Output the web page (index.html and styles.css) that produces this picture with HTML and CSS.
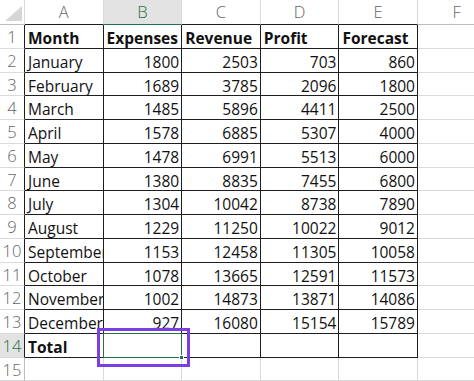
FILE: index.html
```html
<html lang="en">

<head>
    <meta charset="UTF-8">
    <meta name="viewport" content="width=device-width, initial-scale=1.0">
    <title>Sheet1</title>
    <link rel="stylesheet" href="styles.css">
</head>

<body>
    <div class="sheet">
        <div class="corner"><span class="tri"></span></div>
        <div class="hd edge">A</div>
        <div class="hd edge active">B</div>
        <div class="hd edge">C</div>
        <div class="hd edge">D</div>
        <div class="hd edge">E</div>
        <div class="hd">F</div>

        <div class="rh edge">1</div>
        <div class="cell d b">Month</div><div class="cell d b">Expenses</div><div class="cell d b">Revenue</div><div class="cell d b">Profit</div><div class="cell d b">Forecast</div><div class="cell"></div>

        <div class="rh edge">2</div>
        <div class="cell d">January</div><div class="cell d n">1800</div><div class="cell d n">2503</div><div class="cell d n">703</div><div class="cell d n">860</div><div class="cell"></div>

        <div class="rh edge">3</div>
        <div class="cell d">February</div><div class="cell d n">1689</div><div class="cell d n">3785</div><div class="cell d n">2096</div><div class="cell d n">1800</div><div class="cell"></div>

        <div class="rh edge">4</div>
        <div class="cell d">March</div><div class="cell d n">1485</div><div class="cell d n">5896</div><div class="cell d n">4411</div><div class="cell d n">2500</div><div class="cell"></div>

        <div class="rh edge">5</div>
        <div class="cell d">April</div><div class="cell d n">1578</div><div class="cell d n">6885</div><div class="cell d n">5307</div><div class="cell d n">4000</div><div class="cell"></div>

        <div class="rh edge">6</div>
        <div class="cell d">May</div><div class="cell d n">1478</div><div class="cell d n">6991</div><div class="cell d n">5513</div><div class="cell d n">6000</div><div class="cell"></div>

        <div class="rh edge">7</div>
        <div class="cell d">June</div><div class="cell d n">1380</div><div class="cell d n">8835</div><div class="cell d n">7455</div><div class="cell d n">6800</div><div class="cell"></div>

        <div class="rh edge">8</div>
        <div class="cell d">July</div><div class="cell d n">1304</div><div class="cell d n">10042</div><div class="cell d n">8738</div><div class="cell d n">7890</div><div class="cell"></div>

        <div class="rh edge">9</div>
        <div class="cell d">August</div><div class="cell d n">1229</div><div class="cell d n">11250</div><div class="cell d n">10022</div><div class="cell d n">9012</div><div class="cell"></div>

        <div class="rh edge">10</div>
        <div class="cell d">September</div><div class="cell d n">1153</div><div class="cell d n">12458</div><div class="cell d n">11305</div><div class="cell d n">10058</div><div class="cell"></div>

        <div class="rh edge">11</div>
        <div class="cell d">October</div><div class="cell d n">1078</div><div class="cell d n">13665</div><div class="cell d n">12591</div><div class="cell d n">11573</div><div class="cell"></div>

        <div class="rh edge">12</div>
        <div class="cell d">November</div><div class="cell d n">1002</div><div class="cell d n">14873</div><div class="cell d n">13871</div><div class="cell d n">14086</div><div class="cell"></div>

        <div class="rh edge">13</div>
        <div class="cell d">December</div><div class="cell d n">927</div><div class="cell d n">16080</div><div class="cell d n">15154</div><div class="cell d n">15789</div><div class="cell"></div>

        <div class="rh edge active">14</div>
        <div class="cell d b">Total</div>
        <div class="cell d sel"><span class="handle"></span><span class="mark"></span></div>
        <div class="cell d"></div><div class="cell d"></div><div class="cell d"></div><div class="cell"></div>

        <div class="rh">15</div>
        <div class="cell"></div><div class="cell"></div><div class="cell"></div><div class="cell"></div><div class="cell"></div><div class="cell"></div>
    </div>
</body>

</html>
```

FILE: styles.css
```css
* {
    margin: 0;
    padding: 0;
    box-sizing: border-box;
}

body {
    background: #fff;
    font-family: 'Open Sans', sans-serif;
    overflow: hidden;
}

.sheet {
    display: grid;
    grid-template-columns: 25px repeat(6, 78.6px);
    grid-template-rows: 25px repeat(15, 23.75px);
}

/* column headers */
.corner,
.hd {
    background: #fff;
    border-right: 1px solid #dadada;
    border-bottom: 1px solid #bdbdbd;
}

.corner {
    position: relative;
}

.tri {
    position: absolute;
    right: 2px;
    bottom: 3px;
    width: 0;
    height: 0;
    border-left: 17px solid transparent;
    border-bottom: 15px solid #d6d6d6;
}

.hd {
    color: #666;
    font-size: 16.5px;
    font-weight: 300;
    text-align: center;
    line-height: 24px;
}

.hd.edge {
    border-bottom-color: #1e1e1e;
}

.hd.active {
    background: #e3e3e3;
    color: #217346;
    border-bottom: 1px solid #217346;
}

/* row headers */
.rh {
    color: #666;
    font-size: 16.5px;
    font-weight: 300;
    text-align: center;
    line-height: 22px;
    padding-top: 1px;
    border-right: 1px solid #bdbdbd;
    border-bottom: 1px solid #dadada;
}

.rh.edge {
    border-right-color: #1e1e1e;
}

.rh.active {
    background: #e3e3e3;
    color: #217346;
}

/* cells */
.cell {
    position: relative;
    color: #111;
    font-size: 15.5px;
    line-height: 22px;
    padding: 2px 3px 0 3px;
    white-space: nowrap;
    overflow: hidden;
    border-right: 1px solid #dadada;
    border-bottom: 1px solid #dadada;
}

.cell.d {
    border-right-color: #1e1e1e;
    border-bottom-color: #1e1e1e;
}

.n {
    text-align: right;
    padding-right: 2px;
}

.b {
    font-weight: 700;
}

.sel {
    overflow: visible;
    z-index: 2;
}

.sel::before {
    content: "";
    position: absolute;
    left: -1px;
    top: -1px;
    right: -1px;
    bottom: -1px;
    border: 1px solid #217346;
}

.handle {
    position: absolute;
    right: -3px;
    bottom: -3px;
    width: 5px;
    height: 5px;
    background: #217346;
    border: 1px solid #fff;
}

.mark {
    position: absolute;
    left: -7px;
    top: -6px;
    width: 93px;
    height: 39px;
    border: 3px solid #7b3fe4;
}
```
